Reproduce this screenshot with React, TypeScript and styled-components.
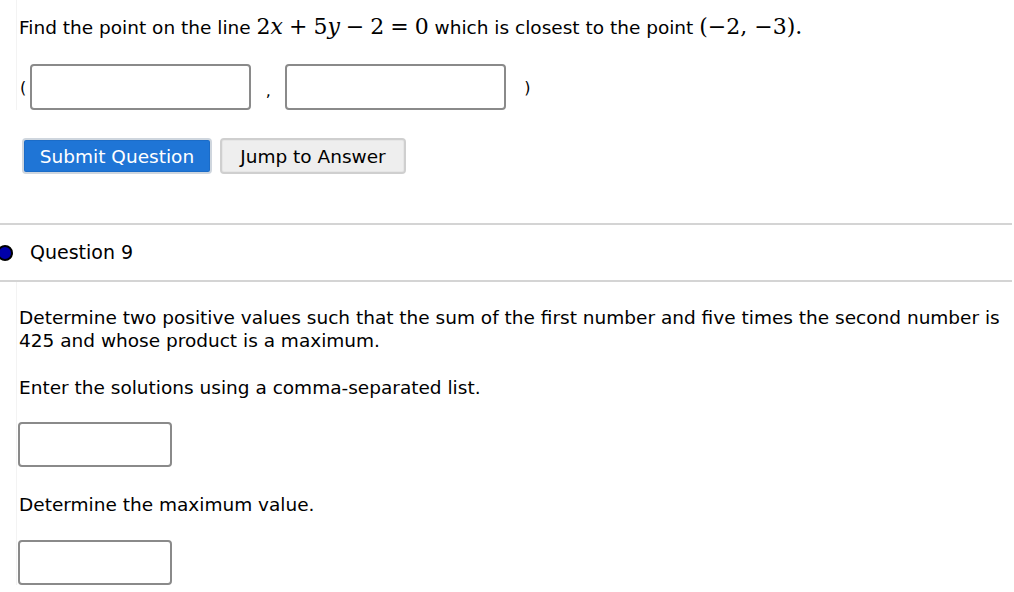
import React from 'react';
import styled, { createGlobalStyle } from 'styled-components';

const GlobalStyle = createGlobalStyle`
  body {
    margin: 0;
    background: #fff;
    color: #000;
    font-family: 'DejaVu Sans', Verdana, sans-serif;
    font-size: 18.5px;
    line-height: 23px;
  }
`;

const Page = styled.div`
  width: 1014px;
  height: 592px;
  overflow: hidden;
`;

const ProblemBody = styled.div<{ top: number }>`
  margin-left: 16px;
  padding: ${p => p.top}px 0 0 2px;
  border-left: 1px solid #f3f3f3;
`;

const Prompt = styled.p<{ gap?: number }>`
  margin: 0 0 ${p => p.gap ?? 0}px;
`;

const Math = styled.span`
  font-family: 'DejaVu Serif', 'Liberation Serif', serif;
  font-size: 22px;

  i {
    font-style: italic;
  }
`;

const Op = styled.span`
  margin: 0 6px;
`;

const AnswerRow = styled.div`
  display: flex;
  align-items: center;
  margin-top: 25px;
  white-space: nowrap;
`;

const Paren = styled.span<{ left: number; right: number }>`
  font-size: 16px;
  padding: 0 ${p => p.right}px 0 ${p => p.left}px;
`;

const Comma = styled.span`
  width: 34px;
  text-align: center;
  font-size: 16px;
  padding-top: 6px;
`;

const AnswerBox = styled.input<{ w: number; h: number }>`
  box-sizing: border-box;
  width: ${p => p.w}px;
  height: ${p => p.h}px;
  border: 2px solid #8a8a8a;
  border-radius: 4px;
  background: #fff;
  margin: 0;
  padding: 0;
  flex: none;
`;

const ButtonRow = styled.div`
  display: flex;
  gap: 8px;
  margin: 28px 0 0 22px;
`;

const Button = styled.button<{ primary?: boolean; w: number }>`
  box-sizing: border-box;
  width: ${p => p.w}px;
  height: 36px;
  padding: 0;
  font-family: inherit;
  font-size: 18.5px;
  border-radius: 4px;
  border: 2px solid ${p => (p.primary ? '#cfd6de' : '#cfcfcf')};
  background: ${p => (p.primary ? '#1f75d6' : '#eeeeee')};
  color: ${p => (p.primary ? '#fff' : '#000')};
  box-shadow: inset 0 0 0 1px ${p => (p.primary ? '#1b6cc8' : '#e6e6e6')};
`;

const QuestionHeader = styled.div`
  display: flex;
  align-items: center;
  gap: 17px;
  margin-top: 49px;
  width: 1012px;
  height: 55px;
  border-top: 2px solid #d4d4d4;
  border-bottom: 2px solid #d4d4d4;
  font-size: 19px;
`;

const Dot = styled.span`
  width: 12px;
  height: 12px;
  margin-left: -3px;
  border-radius: 50%;
  background: #0000aa;
  border: 2px solid #000;
  flex: none;
`;

const Block = styled.div<{ gap: number }>`
  margin-top: ${p => p.gap}px;
`;

export default function App() {
  return (
    <Page>
      <GlobalStyle />
      <ProblemBody top={15}>
        <Prompt>
          Find the point on the line{' '}
          <Math>
            2<i>x</i>
            <Op>+</Op>5<i>y</i>
            <Op>−</Op>2<Op>=</Op>0
          </Math>{' '}
          which is closest to the point <Math>(−2, −3).</Math>
        </Prompt>
        <AnswerRow>
          <Paren left={1} right={4}>(</Paren>
          <AnswerBox w={221} h={46} aria-label="x coordinate" />
          <Comma>,</Comma>
          <AnswerBox w={221} h={46} aria-label="y coordinate" />
          <Paren left={18} right={0}>)</Paren>
        </AnswerRow>
      </ProblemBody>

      <ButtonRow>
        <Button primary w={190}>Submit Question</Button>
        <Button w={186}>Jump to Answer</Button>
      </ButtonRow>

      <QuestionHeader>
        <Dot />
        <span>Question 9</span>
      </QuestionHeader>

      <ProblemBody top={24}>
        <Prompt gap={24}>
          Determine two positive values such that the sum of the first number and five times the second number is
          425 and whose product is a maximum.
        </Prompt>
        <Prompt>Enter the solutions using a comma-separated list.</Prompt>
        <Block gap={23}>
          <AnswerBox w={154} h={45} style={{ marginLeft: -1 }} aria-label="solutions" />
        </Block>
        <Block gap={26}>
          <Prompt>Determine the maximum value.</Prompt>
        </Block>
        <Block gap={24}>
          <AnswerBox w={154} h={45} style={{ marginLeft: -1 }} aria-label="maximum value" />
        </Block>
      </ProblemBody>
    </Page>
  );
}
